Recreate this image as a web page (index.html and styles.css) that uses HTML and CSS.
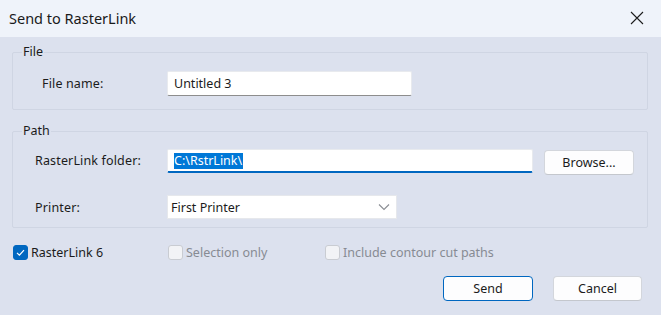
FILE: index.html
```html
<!DOCTYPE html>
<html>
<head>
<meta charset="utf-8">
<link rel="stylesheet" href="styles.css">
</head>
<body>
<div class="window">
  <div class="titlebar">
    <span class="title">Send to RasterLink</span>
    <svg class="close" width="14" height="14" viewBox="0 0 14 14"><path d="M1 1 L13 13 M13 1 L1 13" stroke="#1c1c1c" stroke-width="1.1" fill="none"/></svg>
  </div>
  <div class="content">
    <div class="group group-file">
      <div class="group-label">File</div>
      <div class="row row-file">
        <span class="label label-file">File name:</span>
        <div class="input input-file">Untitled 3</div>
      </div>
    </div>
    <div class="group group-path">
      <div class="group-label">Path</div>
      <div class="row row-folder">
        <span class="label label-path">RasterLink folder:</span>
        <div class="input input-folder"><span class="sel">C:\RstrLink\</span></div>
        <div class="btn btn-browse">Browse...</div>
      </div>
      <div class="row row-printer">
        <span class="label label-path">Printer:</span>
        <div class="select">
          <span>First Printer</span>
          <svg class="chev" width="12" height="8" viewBox="0 0 12 8"><path d="M1 1.5 L6 6.5 L11 1.5" stroke="#8a8d93" stroke-width="1.1" fill="none"/></svg>
        </div>
      </div>
    </div>
    <div class="checks">
      <div class="check check-rl">
        <span class="box checked"><svg width="15" height="15" viewBox="0 0 15 15"><path d="M4 7.8 L6.4 10.2 L11 5.2" stroke="#ffffff" stroke-width="1.2" fill="none"/></svg></span>
        <span class="ctext">RasterLink 6</span>
      </div>
      <div class="check check-sel disabled">
        <span class="box"></span>
        <span class="ctext">Selection only</span>
      </div>
      <div class="check check-cut disabled">
        <span class="box"></span>
        <span class="ctext">Include contour cut paths</span>
      </div>
    </div>
    <div class="buttons">
      <div class="btn btn-send">Send</div>
      <div class="btn btn-cancel">Cancel</div>
    </div>
  </div>
</div>
</body>
</html>
```

FILE: styles.css
```css
* { box-sizing: border-box; }
html, body { margin: 0; padding: 0; }
body {
  font-family: "Noto Sans", "Open Sans", sans-serif;
  font-size: 12.5px;
  color: #1b1b1b;
  background: #dce1ee;
}
.window {
  width: 661px;
  height: 315px;
  background: #dce1ee;
  overflow: hidden;
}
.titlebar {
  height: 37px;
  background: #eff3fa;
  display: flex;
  align-items: center;
  justify-content: space-between;
  padding: 0 17px 1px 9px;
}
.title {
  font-size: 14.5px;
  color: #1a1a1a;
}
.close { display: block; }
.content {
  padding: 0 13px 0 12px;
}
.group {
  border: 1px solid #cfd5e3;
  border-radius: 2px;
}
.group-file {
  margin-top: 15px;
  height: 58px;
}
.group-path {
  margin-top: 21px;
  height: 97px;
}
.group-label {
  display: block;
  width: fit-content;
  margin: -9px 0 0 9px;
  padding: 0 1px;
  background: #dce1ee;
  line-height: 16px;
  height: 16px;
}
.row {
  display: flex;
  align-items: center;
}
.row-file {
  margin-top: 11px;
  padding-left: 29px;
}
.row-folder {
  margin-top: 10px;
  padding-left: 22px;
  align-items: flex-start;
}
.row-folder .label { line-height: 24px; }
.row-printer {
  margin-top: 20px;
  padding-left: 22px;
}
.label { letter-spacing: 0.15px; }
.label-file { width: 125px; }
.label-path { width: 132px; }
.input {
  background: #ffffff;
  border: 1px solid #e8eaee;
  border-bottom: 1px solid #8d8d8d;
  border-radius: 2px;
  display: flex;
  align-items: center;
  padding-left: 6px;
}
.input-file {
  width: 245px;
  height: 25px;
}
.input-folder {
  width: 366px;
  height: 24px;
  border-bottom: 2px solid #0067c0;
  padding-left: 6px;
}
.sel {
  background: #0078d7;
  color: #ffffff;
  line-height: 16px;
  padding: 0 1px 0 0;
}
.btn {
  background: #fdfdfe;
  border: 1px solid #d3d6dc;
  border-bottom-color: #c4c7cd;
  border-radius: 4px;
  display: flex;
  align-items: center;
  justify-content: center;
  height: 25px;
}
.btn-browse {
  width: 90px;
  margin-left: 11px;
  margin-top: 1px;
}
.select {
  width: 230px;
  height: 24px;
  background: #ffffff;
  border: 1px solid #e6e8ec;
  display: flex;
  align-items: center;
  justify-content: space-between;
  padding: 0 6px 0 3px;
}
.chev { display: block; }
.checks {
  display: flex;
  align-items: center;
  margin-top: 17px;
  height: 15px;
}
.check {
  display: flex;
  align-items: center;
}
.check-rl { margin-left: 1px; width: 155px; }
.check-sel { width: 157px; }
.box {
  width: 15px;
  height: 15px;
  border-radius: 3px;
  border: 1px solid #c9ccd2;
  background: #f2f3f6;
  display: block;
}
.box.checked {
  background: #0067c0;
  border-color: #0067c0;
}
.box.checked svg { display: block; margin: -1px; }
.ctext { margin-left: 3px; }
.disabled .ctext { color: #878b93; }
.buttons {
  display: flex;
  justify-content: flex-end;
  gap: 20px;
  margin-top: 16px;
  padding-right: 6px;
}
.btn-send {
  width: 90px;
  border: 1px solid #0067c0;
}
.btn-cancel {
  width: 89px;
}
```
